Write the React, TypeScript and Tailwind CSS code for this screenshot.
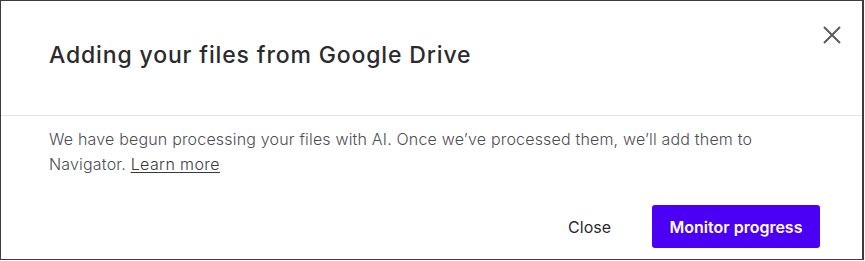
import React from "react";

export default function App() {
  return (
    <div className="w-[865px] h-[261px] bg-white">
      <div className="relative w-[864px] h-[260px] border border-r-2 border-[#3c3c3c] bg-white flex flex-col" style={{ fontFamily: "Inter, 'Open Sans', sans-serif" }}>
        <div className="h-[115px] flex items-center pl-[48px] border-b border-[#e3e3e3] shrink-0">
          <h1 className="text-[23px] font-medium text-[#2b2b2e] tracking-[0.85px] mt-[-6px]">
            Adding your files from Google Drive
          </h1>
        </div>
        <button className="absolute right-[20px] top-[24px] w-[20px] h-[20px] flex items-center justify-center text-[#5a5a5e]" aria-label="Close">
          <svg width="20" height="20" viewBox="0 0 20 20" fill="none" stroke="currentColor" strokeWidth="2">
            <path d="M2 2L18 18M18 2L2 18" />
          </svg>
        </button>
        <div className="pl-[48px] pr-[50px] pt-[11px] text-[16px] leading-[25px] text-[#4e4e52] font-light tracking-[0.18px]">
          We have begun processing your files with AI. Once we’ve processed them, we’ll add them to Navigator.{" "}
          <a className="underline underline-offset-2 text-[#3a3a3e] tracking-[0.4px]">Learn more</a>
        </div>
        <div className="mt-auto flex justify-end items-center gap-[23px] pr-[42px] pb-[11px]">
          <button className="h-[43px] px-[18px] text-[16px] text-[#2b2b2e]">Close</button>
          <button className="h-[43px] w-[168px] rounded-[3px] bg-[#4b00f5] text-white text-[16px] font-semibold">Monitor progress</button>
        </div>
      </div>
    </div>
  );
}
